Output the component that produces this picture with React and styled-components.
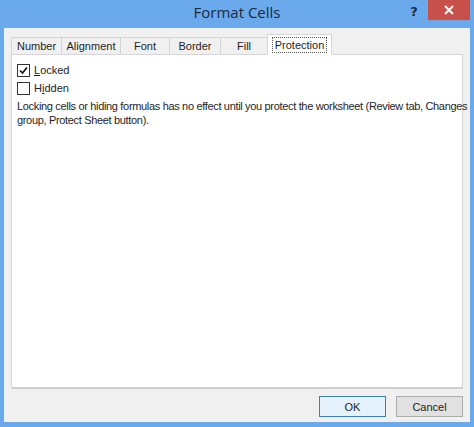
import React from "react";
import styled, { createGlobalStyle } from "styled-components";

const Global = createGlobalStyle`
  html, body { margin: 0; padding: 0; }
  body { width: 474px; height: 427px; overflow: hidden; font-family: "Liberation Sans", Arial, sans-serif; }
  #root { width: 474px; height: 427px; }
`;

const Window = styled.div`
  width: 474px;
  height: 427px;
  box-sizing: border-box;
  background: #6aa9ec;
  display: flex;
  flex-direction: column;
  padding: 0 4px 5px 4px;
`;

const TitleBar = styled.div`
  height: 28px;
  position: relative;
  display: flex;
  align-items: center;
  justify-content: center;
`;

const Title = styled.div`
  font-family: "Open Sans", "Noto Sans", sans-serif;
  font-size: 15px;
  color: #1b2a3e;
  margin-top: -4px;
`;

const Controls = styled.div`
  position: absolute;
  right: 0;
  top: 0;
  display: flex;
  align-items: flex-start;
`;

const Help = styled.div`
  width: 24px;
  height: 22px;
  font-family: "DejaVu Sans", sans-serif;
  font-weight: bold;
  font-size: 13px;
  color: #1a2a40;
  display: flex;
  align-items: center;
  justify-content: center;
  margin-right: 2px;
`;

const Close = styled.div`
  width: 42px;
  height: 20px;
  background: #c7504b;
  display: flex;
  align-items: center;
  justify-content: center;
`;

const Client = styled.div`
  flex: 1;
  background: #f0f0f0;
  display: flex;
  flex-direction: column;
  padding: 6px 7px 0 7px;
`;

const TabRow = styled.div`
  display: flex;
  align-items: flex-end;
  padding-left: 1px;
  height: 21px;
  position: relative;
  z-index: 1;
  margin-bottom: -1px;
`;

const Tab = styled.div`
  box-sizing: border-box;
  height: ${(p) => (p.$active ? "21px" : "18px")};
  ${(p) => (p.$active ? "margin-right: -2px; padding-top: 1px;" : "")}
  background: ${(p) => (p.$active ? "#ffffff" : "#f0f0f0")};
  border: 1px solid #d6d6d6;
  border-bottom: ${(p) => (p.$active ? "1px solid #ffffff" : "1px solid #d6d6d6")};
  margin-left: -1px;
  width: ${(p) => p.$w}px;
  display: flex;
  align-items: center;
  justify-content: center;
  font-size: 11px;
  color: #1e1e1e;
`;

const Focus = styled.span`
  outline: 1px dotted #555;
  outline-offset: 0px;
  padding: 0 2px;
  line-height: 14px;
`;

const Panel = styled.div`
  flex: 1;
  background: #ffffff;
  border: 1px solid #d6d6d6;
  border-bottom: 2px solid #cfcfcf;
  padding: 6px 5px 0 5px;
  display: flex;
  flex-direction: column;
`;

const CheckRow = styled.label`
  display: flex;
  align-items: center;
  height: 18px;
  font-size: 11px;
  color: #1e1e1e;
`;

const Box = styled.span`
  width: 11px;
  height: 11px;
  border: 1px solid #333;
  background: #fff;
  margin-right: 4px;
  display: flex;
  align-items: center;
  justify-content: center;
`;

const U = styled.span`
  text-decoration: underline;
`;

const Note = styled.p`
  margin: 2px 0 0 0;
  font-size: 11px;
  line-height: 14px;
  letter-spacing: -0.33px;
  white-space: nowrap;
  color: #1e1e1e;
`;

const Footer = styled.div`
  height: 33px;
  display: flex;
  justify-content: flex-end;
  align-items: center;
  gap: 10px;
`;

const Button = styled.div`
  box-sizing: border-box;
  width: 67px;
  height: 21px;
  border: 1px solid ${(p) => (p.$default ? "#3c7fb1" : "#acacac")};
  background: ${(p) => (p.$default ? "#e5f1fb" : "#e1e1e1")};
  display: flex;
  align-items: center;
  justify-content: center;
  font-size: 11px;
  color: #1e1e1e;
  margin-top: 2px;
`;

const tabs = [
  { label: "Number", w: 51 },
  { label: "Alignment", w: 60 },
  { label: "Font", w: 50 },
  { label: "Border", w: 52 },
  { label: "Fill", w: 48 },
];

export default function App() {
  return (
    <>
      <Global />
      <Window>
        <TitleBar>
          <Title>Format Cells</Title>
          <Controls>
            <Help>?</Help>
            <Close>
              <svg width="10" height="10" viewBox="0 0 10 10">
                <path d="M1 1 L9 9 M9 1 L1 9" stroke="#ffffff" strokeWidth="1.8" />
              </svg>
            </Close>
          </Controls>
        </TitleBar>
        <Client>
          <TabRow>
            {tabs.map((t) => (
              <Tab key={t.label} $w={t.w}>{t.label}</Tab>
            ))}
            <Tab $active $w={65}>
              <Focus>Protection</Focus>
            </Tab>
          </TabRow>
          <Panel>
            <CheckRow>
              <Box>
                <svg width="9" height="9" viewBox="0 0 9 9">
                  <path d="M1 4.5 L3.5 7 L8 1.5" stroke="#111" strokeWidth="1.7" fill="none" />
                </svg>
              </Box>
              <U>L</U>ocked
            </CheckRow>
            <CheckRow>
              <Box />
              H<U>i</U>dden
            </CheckRow>
            <Note>
              Locking cells or hiding formulas has no effect until you protect the worksheet (Review tab, Changes
              <br />
              group, Protect Sheet button).
            </Note>
          </Panel>
          <Footer>
            <Button $default>OK</Button>
            <Button>Cancel</Button>
          </Footer>
        </Client>
      </Window>
    </>
  );
}
